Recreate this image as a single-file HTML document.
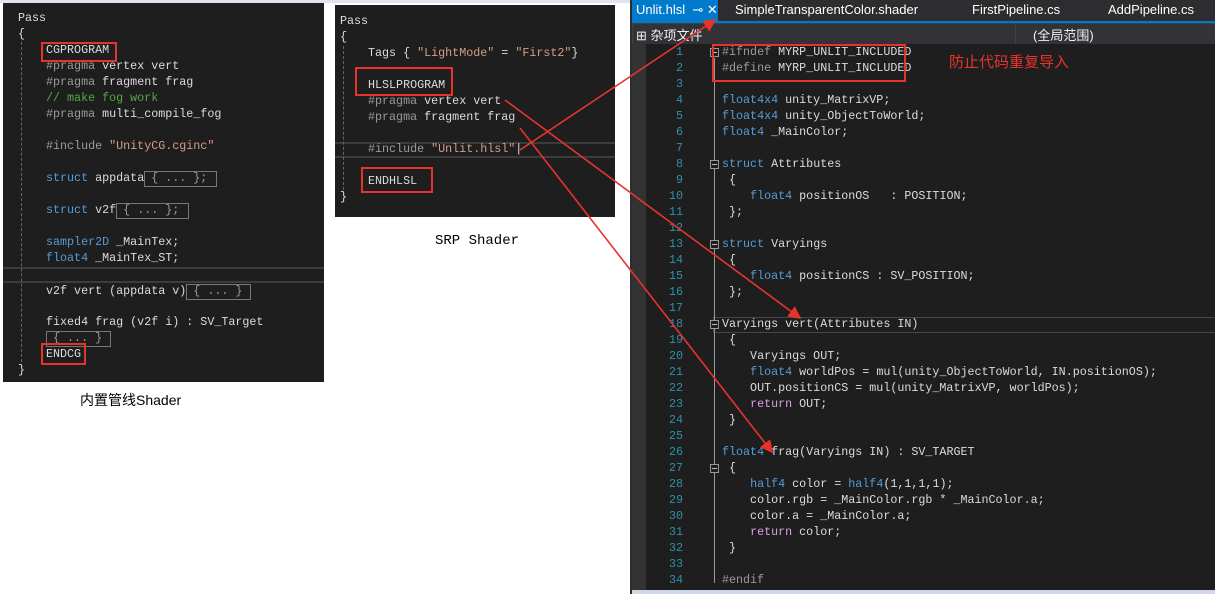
<!DOCTYPE html>
<html><head><meta charset="utf-8"><style>
body{margin:0;width:1215px;height:594px;background:#fff;position:relative;overflow:hidden;font-family:"Liberation Mono","Noto Sans CJK SC",monospace;}
.p{position:absolute;background:#1e1e1e;}
.l{position:absolute;white-space:pre;font-size:11.7px;line-height:16px;color:#dcdcdc;}
.k{color:#569cd6}.g{color:#9b9b9b}.s{color:#d69d85}.c{color:#57a64a}.m{color:#d8a0df}
.box{position:absolute;border:2px solid #e8332d;}
.fb{position:absolute;border:1px solid #777;height:14px;}
.n{position:absolute;width:40px;text-align:right;font-size:11.7px;line-height:16px;color:#2b91af;white-space:pre}
.cap{position:absolute;font-family:"Liberation Sans","Noto Sans CJK SC",sans-serif;font-size:14px;color:#000}
.fold{position:absolute;left:710px;width:7px;height:7px;border:1px solid #999;background:#1e1e1e}
.fold:after{content:"";position:absolute;left:1px;top:3px;width:5px;height:1px;background:#bbb}
</style></head><body>
<div style="position:absolute;left:0;top:0;width:630px;height:3px;background:#dfe4ee"></div>
<div class="p" style="left:3px;top:3px;width:321px;height:379px"></div>
<div style="position:absolute;left:3px;top:267px;width:321px;height:2px;background:#3c3c3c"></div>
<div style="position:absolute;left:3px;top:281px;width:321px;height:2px;background:#3c3c3c"></div>
<div style="position:absolute;left:21px;top:42px;height:320px;border-left:1px dashed #666"></div>
<div class="l" style="left:18px;top:10px">Pass</div>
<div class="l" style="left:18px;top:26px">{</div>
<div class="l" style="left:46px;top:42px">CGPROGRAM</div>
<div class="l" style="left:46px;top:58px"><span class="g">#pragma</span> vertex vert</div>
<div class="l" style="left:46px;top:74px"><span class="g">#pragma</span> fragment frag</div>
<div class="l" style="left:46px;top:90px"><span class="c">// make fog work</span></div>
<div class="l" style="left:46px;top:106px"><span class="g">#pragma</span> multi_compile_fog</div>
<div class="l" style="left:46px;top:138px"><span class="g">#include</span> <span class="s">"UnityCG.cginc"</span></div>
<div class="l" style="left:46px;top:170px"><span class="k">struct</span> appdata<span class="g"> { ... };</span></div>
<div class="fb" style="left:144px;top:171px;width:71px"></div>
<div class="l" style="left:46px;top:202px"><span class="k">struct</span> v2f<span class="g"> { ... };</span></div>
<div class="fb" style="left:116px;top:203px;width:71px"></div>
<div class="l" style="left:46px;top:234px"><span class="k">sampler2D</span> _MainTex;</div>
<div class="l" style="left:46px;top:250px"><span class="k">float4</span> _MainTex_ST;</div>
<div class="l" style="left:46px;top:283px">v2f vert (appdata v)<span class="g"> { ... }</span></div>
<div class="fb" style="left:186px;top:284px;width:63px"></div>
<div class="l" style="left:46px;top:314px">fixed4 frag (v2f i) : SV_Target</div>
<div class="l g" style="left:46px;top:330px"> { ... }</div>
<div class="fb" style="left:46px;top:331px;width:63px"></div>
<div class="l" style="left:46px;top:346px">ENDCG</div>
<div class="l" style="left:18px;top:362px">}</div>
<div class="box" style="left:41px;top:42px;width:72px;height:16px"></div>
<div class="box" style="left:41px;top:343px;width:41px;height:18px"></div>
<div class="cap" style="left:80px;top:390px">内置管线Shader</div>

<div class="p" style="left:335px;top:5px;width:280px;height:212px"></div>
<div style="position:absolute;left:335px;top:142px;width:280px;height:2px;background:#3c3c3c"></div>
<div style="position:absolute;left:335px;top:156px;width:280px;height:2px;background:#3c3c3c"></div>
<div style="position:absolute;left:343px;top:46px;height:144px;border-left:1px dashed #666"></div>
<div class="l" style="left:340px;top:13px">Pass</div>
<div class="l" style="left:340px;top:29px">{</div>
<div class="l" style="left:368px;top:45px">Tags { <span class="s">"LightMode"</span> = <span class="s">"First2"</span>}</div>
<div class="l" style="left:368px;top:77px">HLSLPROGRAM</div>
<div class="l" style="left:368px;top:93px"><span class="g">#pragma</span> vertex vert</div>
<div class="l" style="left:368px;top:109px"><span class="g">#pragma</span> fragment frag</div>
<div class="l" style="left:368px;top:141px"><span class="g">#include</span> <span class="s">"Unlit.hlsl"</span>|</div>
<div class="l" style="left:368px;top:173px">ENDHLSL</div>
<div class="l" style="left:340px;top:189px">}</div>
<div class="box" style="left:355px;top:67px;width:94px;height:25px"></div>
<div class="box" style="left:361px;top:167px;width:68px;height:22px"></div>
<div class="cap" style="left:435px;top:233px;font-family:'Liberation Mono',monospace">SRP Shader</div>

<div style="position:absolute;left:630px;top:0;width:585px;height:594px;background:#2d2d30"></div>
<div style="position:absolute;left:632px;top:0;width:86px;height:21px;background:#007acc"></div>
<div style="position:absolute;left:632px;top:21px;width:583px;height:2px;background:#007acc"></div>
<div class="cap" style="left:636px;top:2px;color:#fff;font-size:13px">Unlit.hlsl&nbsp;&nbsp;⊸ ✕</div>
<div class="cap" style="left:735px;top:2px;color:#fff;font-size:13px">SimpleTransparentColor.shader</div>
<div class="cap" style="left:972px;top:2px;color:#fff;font-size:13px">FirstPipeline.cs</div>
<div class="cap" style="left:1108px;top:2px;color:#fff;font-size:13px">AddPipeline.cs</div>
<div style="position:absolute;left:632px;top:23px;width:428px;height:20px;background:#333337;border:1px solid #3f3f46"></div>
<div style="position:absolute;left:1015px;top:23px;width:200px;height:20px;background:#333337;border:1px solid #3f3f46"></div>
<div class="cap" style="left:636px;top:25px;color:#f1f1f1;font-size:13px">⊞ 杂项文件</div>
<div class="cap" style="left:1033px;top:25px;color:#f1f1f1;font-size:13px">(全局范围)</div>
<div style="position:absolute;left:632px;top:44px;width:14px;height:546px;background:#333333"></div>
<div class="p" style="left:646px;top:44px;width:569px;height:546px"></div>
<div style="position:absolute;left:632px;top:590px;width:583px;height:4px;background:#cfd8e8"></div>
<div style="position:absolute;left:713px;top:317px;width:502px;height:14px;border:1px solid #464646"></div>
<div style="position:absolute;left:714px;top:58px;height:525px;border-left:1px solid #999"></div>
<div class="fold" style="top:48px"></div>
<div class="fold" style="top:160px"></div>
<div class="fold" style="top:240px"></div>
<div class="fold" style="top:320px"></div>
<div class="fold" style="top:464px"></div>
<div id="nums"></div>
<div id="code"></div>
<div class="box" style="left:712px;top:44px;width:190px;height:34px"></div>
<div class="cap" style="left:949px;top:51px;color:#e8332d;font-size:15px">防止代码重复导入</div>

<svg style="position:absolute;left:0;top:0" width="1215" height="594">
<defs><marker id="a" markerWidth="8" markerHeight="8" refX="7" refY="4" orient="auto"><path d="M0,0 L8,4 L0,8 z" fill="#e8332d"/></marker></defs>
<g stroke="#e8332d" stroke-width="1.6" fill="none" marker-end="url(#a)">
<line x1="520" y1="150" x2="715" y2="20"/>
<line x1="505" y1="100" x2="800" y2="318"/>
<line x1="520" y1="128" x2="772" y2="452"/>
</g></svg>
<script>
var L=[
'<span class="g">#ifndef</span> MYRP_UNLIT_INCLUDED',
'<span class="g">#define</span> MYRP_UNLIT_INCLUDED','',
'<span class="k">float4x4</span> unity_MatrixVP;',
'<span class="k">float4x4</span> unity_ObjectToWorld;',
'<span class="k">float4</span> _MainColor;','',
'<span class="k">struct</span> Attributes',' {',
'    <span class="k">float4</span> positionOS   : POSITION;',' };','',
'<span class="k">struct</span> Varyings',' {',
'    <span class="k">float4</span> positionCS : SV_POSITION;',' };','',
'Varyings vert(Attributes IN)',' {',
'    Varyings OUT;',
'    <span class="k">float4</span> worldPos = mul(unity_ObjectToWorld, IN.positionOS);',
'    OUT.positionCS = mul(unity_MatrixVP, worldPos);',
'    <span class="m">return</span> OUT;',' }','',
'<span class="k">float4</span> frag(Varyings IN) : SV_TARGET',' {',
'    <span class="k">half4</span> color = <span class="k">half4</span>(1,1,1,1);',
'    color.rgb = _MainColor.rgb * _MainColor.a;',
'    color.a = _MainColor.a;',
'    <span class="m">return</span> color;',' }','',
'<span class="g">#endif</span>'];
var h='',n='';
for(var i=0;i<L.length;i++){var t=44+i*16;
n+='<div class="n" style="left:643px;top:'+t+'px">'+(i+1)+'</div>';
h+='<div class="l" style="left:722px;top:'+t+'px">'+L[i]+'</div>';}
document.getElementById('nums').innerHTML=n;document.getElementById('code').innerHTML=h;
</script>
</body></html>
